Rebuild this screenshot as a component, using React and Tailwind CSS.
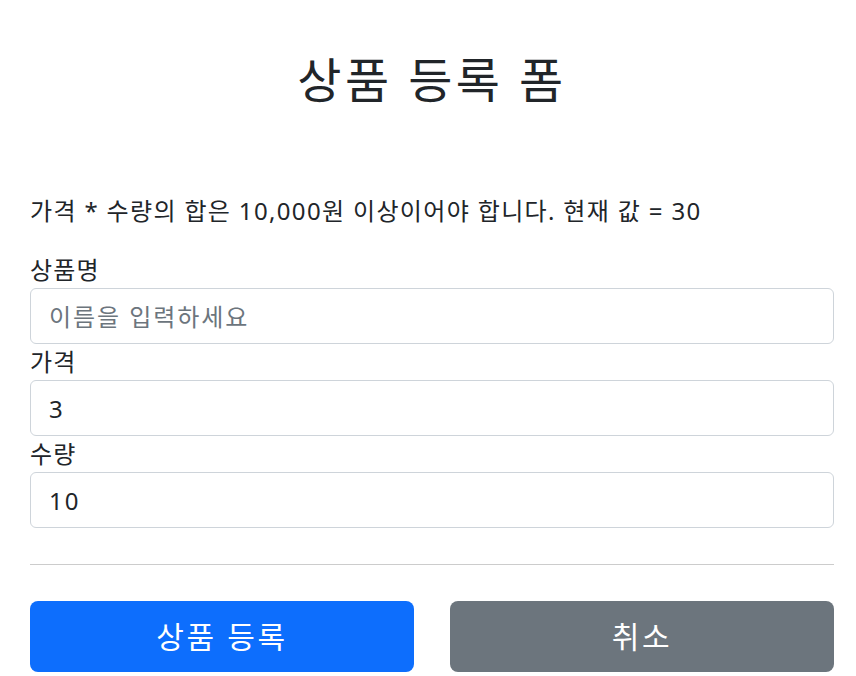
export default function App() {
  const fields = [
    { label: '상품명', value: '', placeholder: '이름을 입력하세요' },
    { label: '가격', value: '3' },
    { label: '수량', value: '10' },
  ];

  return (
    <div
      className="min-h-screen bg-white pl-[30px] pr-[22px] text-[#212529]"
      style={{ fontFamily: '"Noto Sans", "Noto Sans CJK KR", sans-serif' }}
    >
      <div className="pt-[51px] text-center">
        <h2 className="text-[48px] leading-[58px] font-normal tracking-[0.07em]">상품 등록 폼</h2>
      </div>

      <p className="mt-[84px] mb-[23px] text-[24px] leading-[36px] tracking-[0.056em]">
        가격 * 수량의 합은 10,000원 이상이어야 합니다. 현재 값 = 30
      </p>

      <form>
        {fields.map((f) => (
          <div key={f.label}>
            <label className="block text-[24px] leading-[36px] tracking-[0.05em]">{f.label}</label>
            <input
              type="text"
              defaultValue={f.value}
              placeholder={f.placeholder}
              className="block w-full h-[56px] px-[18px] text-[24px] tracking-[0.08em] rounded-[6px] border border-[#ced4da] bg-white text-[#212529] placeholder:text-[#6c757d] outline-none"
            />
          </div>
        ))}

        <hr className="my-[36px] border-0 border-t border-[#cccccc]" />

        <div className="grid grid-cols-2 gap-[36px]">
          <button
            type="button"
            className="h-[71px] rounded-[8px] bg-[#0d6efd] text-white text-[30px] leading-[45px] tracking-[0.09em]"
          >
            상품 등록
          </button>
          <button
            type="button"
            className="h-[71px] rounded-[8px] bg-[#6c757d] text-white text-[30px] leading-[45px] tracking-[0.09em]"
          >
            취소
          </button>
        </div>
      </form>
    </div>
  );
}
